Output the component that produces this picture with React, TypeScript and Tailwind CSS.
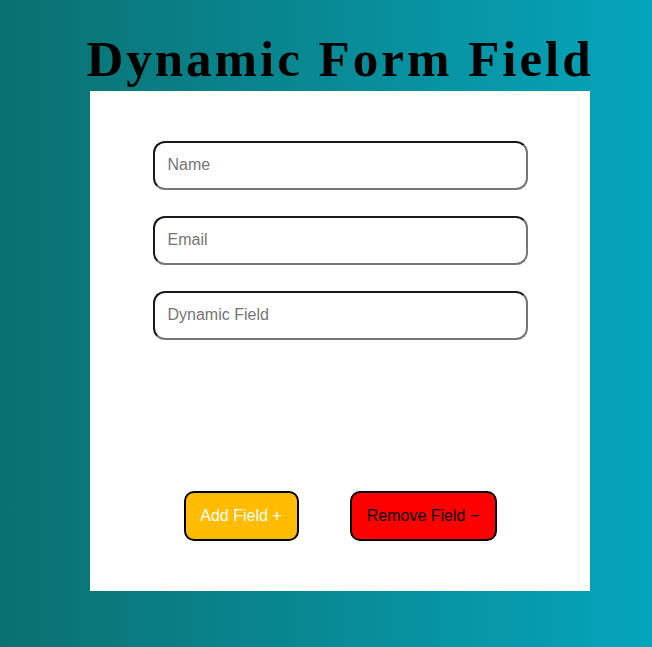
import { useState } from "react";

type Field = { id: number; placeholder: string };

export default function App() {
  const [fields, setFields] = useState<Field[]>([
    { id: 1, placeholder: "Name" },
    { id: 2, placeholder: "Email" },
    { id: 3, placeholder: "Dynamic Field" },
  ]);

  function add() {
    setFields((f) => [...f, { id: Date.now(), placeholder: "Dynamic Field" }]);
  }

  function remove() {
    setFields((f) => (f.length > 2 ? f.slice(0, -1) : f));
  }

  return (
    <div className="flex min-h-[647px] flex-col items-center bg-gradient-to-r from-[#0a7070] to-[#04a5bc] pl-[28px] font-['Liberation_Sans',Arial,sans-serif]">
      <h1 className="mt-[30px] text-[51px] font-bold leading-[1.15] tracking-[3px] text-black font-['Liberation_Serif','Times_New_Roman',serif]">
        Dynamic Form Field
      </h1>
      <div className="mt-[2px] flex h-[500px] w-[500px] flex-col items-center bg-white pb-[50px] pt-[50px]">
        <div className="flex flex-col gap-[26px]">
          {fields.map((f) => (
            <input
              key={f.id}
              type="text"
              placeholder={f.placeholder}
              className="h-[49px] w-[375px] rounded-[12px] border-2 border-b-[#767676] border-l-[#1a1a1a] border-r-[#767676] border-t-[#1a1a1a] px-[13px] text-[16px] text-black outline-none placeholder:text-[#757575]"
            />
          ))}
        </div>
        <div className="mt-auto flex gap-[51px]">
          <button
            type="button"
            onClick={add}
            className="h-[50px] w-[115px] rounded-[10px] border-2 border-black bg-[#ffbc00] text-[16px] text-white"
          >
            Add Field +
          </button>
          <button
            type="button"
            onClick={remove}
            className="h-[50px] w-[147px] rounded-[10px] border-2 border-black bg-[#ff0000] text-[16px] text-black"
          >
            Remove Field −
          </button>
        </div>
      </div>
    </div>
  );
}
